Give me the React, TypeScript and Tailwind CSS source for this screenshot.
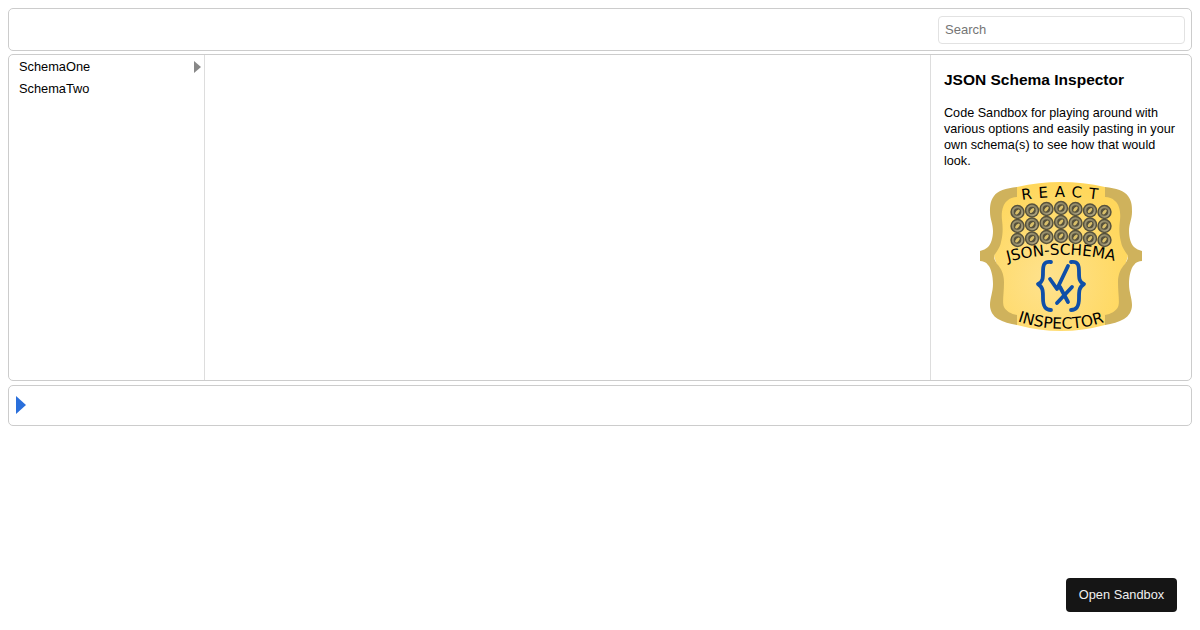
const rings: [number, number][] = [];
const xs = [47.5, 62, 76.5, 91, 105.5, 120, 134.5];
const arch = [0, -1.5, -3, -4, -3, -1.5, 0];
[38, 52, 66].forEach((y) => xs.forEach((x, i) => rings.push([x, y + arch[i]])));

const band =
  "M47 13 C36 14 27 17 24 22 C20 27 20 33 20 38 C20 45 23 50 23 57 C23 64 21 70 18 73 C16 75 13 76 10 77 L10 87 C13 87 16 88 18 91 C21 94 23 102 23 110 C23 118 20 124 20 131 C20 137 23 142 28 145 C33 148 40 150 47 151 L47 141 C41 140 36 137 34 133 C32 128 34 120 34 108 C34 100 31 94 27 90 C26 88 24 86 24 82 C26 78 30 74 31 68 C33 60 33 54 32 46 C31 38 33 30 37 27 C40 24 43 23 47 23 Z";

function Logo() {
  return (
    <svg width="180" height="165" viewBox="0 0 180 165" className="block">
      <defs>
        <radialGradient id="fill" cx="0.4" cy="0.65" r="0.65">
          <stop offset="0" stopColor="#fee28e" />
          <stop offset="1" stopColor="#ffd75c" />
        </radialGradient>
        <linearGradient id="ring" x1="0" x2="1" y1="0" y2="1">
          <stop offset="0" stopColor="#a39a74" />
          <stop offset="0.5" stopColor="#8a8262" />
          <stop offset="1" stopColor="#b8ae88" />
        </linearGradient>
        <path id="arcTop" d="M48 27 Q91 19 138 27" />
        <path id="arcMid" d="M30 90 Q91 72 152 89" />
        <path id="arcBot" d="M44 146 Q91 163 138 147" />
      </defs>
      <path
        d="M47 13 Q91 3 135 13 L154 30 L154 70 L158 82 L154 95 L154 135 L135 151 Q91 163 47 151 L28 135 L28 95 L24 82 L28 70 L28 30 Z"
        fill="url(#fill)"
      />
      <path d={band} fill="#cfb25c" />
      <path d={band} fill="#cfb25c" transform="translate(182,0) scale(-1,1)" />
      {rings.map(([x, y], i) => (
        <g key={i}>
          <circle cx={x} cy={y} r="7.2" fill="#56513c" />
          <circle cx={x} cy={y} r="4.7" fill="none" stroke="url(#ring)" strokeWidth="2" />
          <ellipse cx={x} cy={y} rx="1.5" ry="3" fill="#d8bf6a" transform={`rotate(40 ${x} ${y})`} />
        </g>
      ))}
      <text fontFamily="'DejaVu Sans', sans-serif" fontSize="15" fill="#000" letterSpacing="6.5">
        <textPath href="#arcTop" startOffset="50%" textAnchor="middle">REACT</textPath>
      </text>
      <text fontFamily="'DejaVu Sans', sans-serif" fontSize="15.2" fill="#000">
        <textPath href="#arcMid" startOffset="50%" textAnchor="middle">JSON-SCHEMA</textPath>
      </text>
      <text fontFamily="'DejaVu Sans', sans-serif" fontSize="15.5" fill="#000">
        <textPath href="#arcBot" startOffset="50%" textAnchor="middle">INSPECTOR</textPath>
      </text>
      <g fill="none" stroke="#0f4fa8" strokeWidth="3.8" strokeLinecap="round" strokeLinejoin="round">
        <path d="M81 88 C74 87 73 91 73 98 C73 104 73 108 68 110 C73 113 73 117 73 124 C73 132 75 136 81 136" />
        <path d="M101 88 C108 87 109 91 109 98 C109 104 109 108 114 110 C109 113 109 117 109 124 C109 132 107 136 101 136" />
        <path d="M80 105 L87 115 L98 92" />
        <path d="M87 129 L102 113" />
        <path d="M90 113 L98 128" />
      </g>
    </svg>
  );
}

export default function App() {
  return (
    <div className="relative h-[630px] w-[1200px] bg-white p-2 font-['Liberation_Sans',Arial,sans-serif] text-[12.8px] leading-4 text-black">
      <div className="flex h-[43px] items-center justify-end rounded-[5px] border border-[#ccc] pr-1.5">
        <input
          placeholder="Search"
          className="h-7 w-[247px] rounded-[4px] border border-[#e2e2e2] px-1.5 text-[13px] text-black outline-none placeholder:text-[#757575]"
        />
      </div>
      <div className="mt-[3px] flex h-[327px] rounded-[5px] border border-[#ccc]">
        <div className="w-[196px] shrink-0 border-r border-[#ddd]">
          <div className="relative flex h-[22px] items-center pl-2.5 pt-0.5">
            SchemaOne
            <span className="absolute right-[3px] top-[6px] h-0 w-0 border-y-[6px] border-l-[7px] border-y-transparent border-l-[#888]" />
          </div>
          <div className="flex h-[22px] items-center pl-2.5 pt-0.5">SchemaTwo</div>
        </div>
        <div className="flex-1" />
        <div className="w-[261px] shrink-0 border-l border-[#ddd] pl-[13px] pr-3">
          <h1 className="mt-4 text-[15.5px] font-bold leading-[18px]">JSON Schema Inspector</h1>
          <p className="mt-[16px] w-[235px] text-[12.64px]">
            Code Sandbox for playing around with various options and easily pasting in your own schema(s) to see how that would look.
          </p>
          <div className="ml-[26px] mt-[5px]">
            <Logo />
          </div>
        </div>
      </div>
      <div className="mt-1 flex h-[41px] items-center rounded-[5px] border border-[#ccc] pb-px pl-[7px]">
        <span className="h-0 w-0 border-y-[9px] border-l-[10px] border-y-transparent border-l-[#2a6fdb]" />
      </div>
      <button className="absolute left-[1066px] top-[578px] h-[34px] w-[111px] rounded-[4px] bg-[#151515] text-[12.8px] text-[#f0f0f0]">
        Open Sandbox
      </button>
    </div>
  );
}
